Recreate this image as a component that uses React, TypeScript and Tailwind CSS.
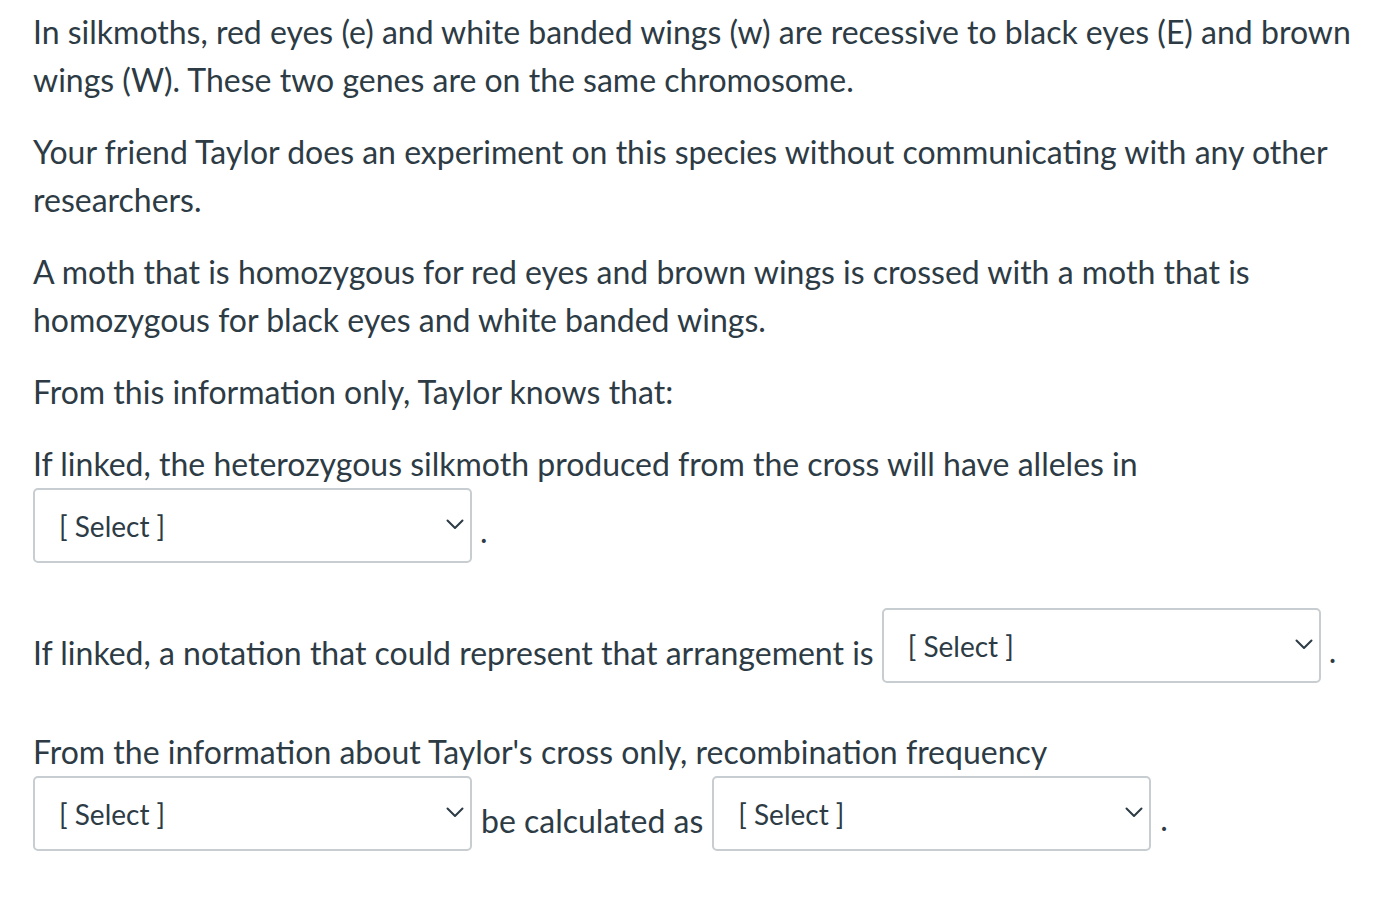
import React from 'react'

const textStyle = 'text-[32px] leading-[48px]'

function Select({ className = '' }: { className?: string }) {
  return (
    <div
      className={`relative h-[75px] w-[439px] shrink-0 rounded-[5px] border-2 border-[#c7cdd1] bg-white ${className}`}
    >
      <span className="absolute left-[24px] top-[14px] text-[28px] leading-[44px] text-[#2d3b45]">[ Select ]</span>
      <svg
        className="absolute right-[6px] top-[29px]"
        width="18"
        height="11"
        viewBox="0 0 18 11"
        fill="none"
      >
        <path d="M1.5 1.5 L9 9 L16.5 1.5" stroke="#2d3b45" strokeWidth="2" strokeLinecap="round" strokeLinejoin="round" />
      </svg>
    </div>
  )
}

export default function App() {
  return (
    <div
      className={`min-h-screen bg-white pl-[33px] pt-[8px] text-[#2d3b45] ${textStyle}`}
      style={{ fontFamily: 'Lato, "Liberation Sans", sans-serif' }}
    >
      <p className="mb-[24px]">
        In silkmoths, red eyes (e) and white banded wings (w) are recessive to black eyes (E) and brown
        <br />
        wings (W). These two genes are on the same chromosome.
      </p>
      <p className="mb-[24px]">
        Your friend Taylor does an experiment on this species without communicating with any other
        <br />
        researchers.
      </p>
      <p className="mb-[24px]">
        A moth that is homozygous for red eyes and brown wings is crossed with a moth that is
        <br />
        homozygous for black eyes and white banded wings.
      </p>
      <p className="mb-[24px]">From this information only, Taylor knows that:</p>
      <p>If linked, the heterozygous silkmoth produced from the cross will have alleles in</p>

      {/* row A */}
      <div className="flex items-start">
        <Select />
        <span className="ml-[8px] mt-[19px]">.</span>
      </div>

      {/* row B */}
      <div className="mt-[45px] flex items-start">
        <span className="mt-[21px] whitespace-nowrap">If linked, a notation that could represent that arrangement is</span>
        <Select className="ml-[8px]" />
        <span className="ml-[8px] mt-[19px]">.</span>
      </div>

      <p className="mt-[45px]">From the information about Taylor's cross only, recombination frequency</p>

      {/* row C */}
      <div className="flex items-start">
        <Select />
        <span className="ml-[9px] mt-[21px] whitespace-nowrap">be calculated as</span>
        <Select className="ml-[9px]" />
        <span className="ml-[9px] mt-[19px]">.</span>
      </div>
    </div>
  )
}
